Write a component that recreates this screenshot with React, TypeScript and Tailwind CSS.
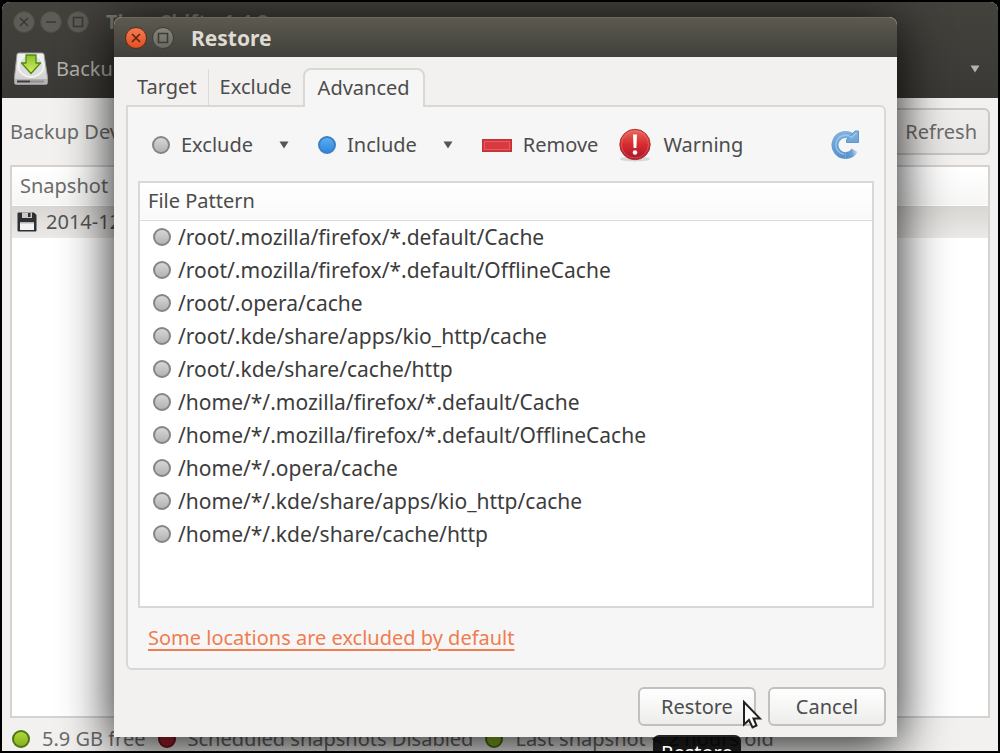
import type { ReactNode } from "react";

const patterns = [
  "/root/.mozilla/firefox/*.default/Cache",
  "/root/.mozilla/firefox/*.default/OfflineCache",
  "/root/.opera/cache",
  "/root/.kde/share/apps/kio_http/cache",
  "/root/.kde/share/cache/http",
  "/home/*/.mozilla/firefox/*.default/Cache",
  "/home/*/.mozilla/firefox/*.default/OfflineCache",
  "/home/*/.opera/cache",
  "/home/*/.kde/share/apps/kio_http/cache",
  "/home/*/.kde/share/cache/http",
];

const dotStyles = {
  gray: "border-[#858585] from-[#dcdcdc] to-[#aeaeae]",
  blue: "border-[#3d7fc4] from-[#5fb2f3] to-[#2a83dd]",
  green: "border-[#4f7512] from-[#b4dc3c] to-[#7fae1c]",
  red: "border-[#7d1420] from-[#cf3a45] to-[#a51c2b]",
};

function Dot({ color }: { color: keyof typeof dotStyles }) {
  return (
    <span
      className={`inline-block size-[18px] shrink-0 rounded-full border-2 bg-linear-to-b bg-origin-border ${dotStyles[color]}`}
    />
  );
}

function Caret({ className }: { className: string }) {
  return (
    <svg viewBox="0 0 10 8" className={`h-[8px] w-[10px] ${className}`} aria-hidden="true">
      <path d="M0.5 0.5h9L5 7.5z" fill="currentColor" />
    </svg>
  );
}

function DriveIcon() {
  return (
    <svg viewBox="0 0 36 34" className="h-[34px] w-[36px]" aria-hidden="true">
      <defs>
        <linearGradient id="driveTop" x1="0" y1="0" x2="0" y2="1">
          <stop offset="0" stopColor="#f4f4f4" />
          <stop offset="1" stopColor="#c9c9c9" />
        </linearGradient>
        <linearGradient id="driveArrow" x1="0" y1="0" x2="0" y2="1">
          <stop offset="0" stopColor="#8cc02a" />
          <stop offset="1" stopColor="#d6f06a" />
        </linearGradient>
      </defs>
      <path d="M4 2.500Q4.300 1 6 1H29Q30.700 1 31 2.500L34.500 25V30.500Q34.500 32.500 32.500 32.500H3.500Q1.500 32.500 1.500 30.500V25Z" fill="url(#driveTop)" stroke="#9a9a9a" />
      <ellipse cx="18" cy="14" rx="12.500" ry="11" fill="#dedede" stroke="#f7f7f7" strokeWidth="1.500" />
      <path d="M2 27H34V30.500Q34 32 32.500 32H3.500Q2 32 2 30.500Z" fill="#b3b3b3" />
      <path d="M4 28.500H17V30.500H4Z" fill="#3b3b3b" />
      <path d="M17 28.500H31V30.500H17Z" fill="#8f8f8f" />
      <path d="M13 3H23V11H27.500L18 21.500L8.500 11H13Z" fill="url(#driveArrow)" stroke="#4f8a0c" strokeWidth="1.300" strokeLinejoin="round" />
    </svg>
  );
}

function FloppyIcon() {
  return (
    <svg viewBox="0 0 20 20" className="size-[20px] shrink-0" aria-hidden="true">
      <path d="M0.500 1.500Q0.500 0.500 1.500 0.500H17L19.500 3V18.500Q19.500 19.500 18.500 19.500H1.500Q0.500 19.500 0.500 18.500Z" fill="#2e3032" />
      <path d="M5 0.500H15V6H5Z" fill="#c9c9c9" />
      <path d="M11 1H13.500V5H11Z" fill="#2e3032" />
      <path d="M3 10H17V18H3Z" fill="#f3f3f3" />
      <path d="M3 10H17V11.500H3Z" fill="#b5b5b5" />
    </svg>
  );
}

function RemoveIcon() {
  return (
    <svg viewBox="0 0 30 13" className="h-[13px] w-[30px]" aria-hidden="true">
      <rect x="0.750" y="0.750" width="28.500" height="11.500" fill="#d93a3f" stroke="#c4323a" strokeWidth="1.500" />
      <rect x="2.500" y="2.500" width="25" height="8" fill="none" stroke="#e25c60" />
    </svg>
  );
}

function WarningIcon() {
  return (
    <svg viewBox="0 0 34 34" className="size-[34px]" aria-hidden="true">
      <defs>
        <linearGradient id="warn" x1="0" y1="0" x2="0" y2="1">
          <stop offset="0" stopColor="#e8695a" />
          <stop offset="0.500" stopColor="#d62b30" />
          <stop offset="1" stopColor="#a8142b" />
        </linearGradient>
      </defs>
      <ellipse cx="17" cy="31" rx="15" ry="2.500" fill="#000" opacity="0.120" />
      <circle cx="17" cy="16.500" r="15.200" fill="url(#warn)" stroke="#b3303a" />
      <circle cx="17" cy="16.500" r="13.500" fill="none" stroke="#f08a80" opacity="0.450" />
      <path d="M15 6.500H19L18.400 20H15.600Z" fill="#fff" />
      <circle cx="17" cy="24.500" r="2.300" fill="#fff" />
    </svg>
  );
}

function ReloadIcon() {
  return (
    <svg viewBox="0 0 30 30" className="size-[30px]" aria-hidden="true">
      <defs>
        <linearGradient id="reload" gradientUnits="userSpaceOnUse" x1="0" y1="0" x2="0" y2="29">
          <stop offset="0" stopColor="#83b3e0" />
          <stop offset="1" stopColor="#5590cb" />
        </linearGradient>
        <linearGradient id="reloadTail" gradientUnits="userSpaceOnUse" x1="14" y1="24" x2="27" y2="20">
          <stop offset="0" stopColor="#5590cb" />
          <stop offset="0.500" stopColor="#6a9fd5" />
          <stop offset="1" stopColor="#8fb8e0" stopOpacity="0.300" />
        </linearGradient>
      </defs>
      <path d="M14.500 25.500A10.500 10.500 0 0 0 23.600 20.200" fill="none" stroke="url(#reloadTail)" strokeWidth="7" />
      <path d="M22 7.600A10.500 10.500 0 1 0 14.600 25.500" fill="none" stroke="url(#reload)" strokeWidth="7" />
      <path d="M27.500 1V12.500H15.500V9.500L24 1Z" fill="url(#reload)" stroke="#5f97d0" strokeLinejoin="round" />
      <path d="M13 24.200A9.500 9.500 0 1 1 20.500 7.500L25.500 3" fill="none" stroke="#a9caeb" strokeWidth="1.400" opacity="0.800" />
    </svg>
  );
}

function WindowButton({ kind, tone, label }: { kind: "close" | "min" | "max"; tone: "dim" | "gray" | "orange"; label: string }) {
  const tones = {
    dim: "border-[#4c4b46] bg-[#5d5c57] text-[#3a3935]",
    gray: "border-[#3c3b36] bg-linear-to-b from-[#86847b] to-[#6a6962] text-[#3d3c38]",
    orange: "border-[#5c2b16] bg-linear-to-b from-[#f47a50] to-[#e14f1f] text-[#5a2211]",
  };
  return (
    <button aria-label={label} className={`flex size-[22px] items-center justify-center rounded-full border ${tones[tone]}`}>
      <svg viewBox="0 0 12 12" className="size-[12px]" fill="none" stroke="currentColor" strokeWidth="1.600" aria-hidden="true">
        {kind === "close" && <path d="M2 2L10 10M10 2L2 10" />}
        {kind === "min" && <path d="M1 6H11" />}
        {kind === "max" && <path d="M1.500 1.500H10.500V10.500H1.500Z" />}
      </svg>
    </button>
  );
}

function ToolButton({ icon, children }: { icon: ReactNode; children: ReactNode }) {
  return (
    <button className="flex items-center gap-[11px] whitespace-nowrap">
      {icon}
      {children}
    </button>
  );
}

function MainWindow() {
  return (
    <div className="flex flex-1 flex-col overflow-hidden rounded-t-lg bg-[#f2f1f0] text-[#6b6b6b]">
      <header className="flex h-[96px] shrink-0 flex-col bg-linear-to-b from-[#43423d] to-[#3a3935] pl-[11px]">
        <div className="flex h-[40px] items-center gap-[5px]">
          <WindowButton kind="close" tone="dim" label="Close main window" />
          <WindowButton kind="min" tone="dim" label="Minimize main window" />
          <WindowButton kind="max" tone="dim" label="Maximize main window" />
          <h1 className="ml-[12px] font-bold text-[#807d75]">Time Shift v1.4.2</h1>
        </div>
        <div className="flex h-[54px] items-center justify-between pr-[18px] text-[#b5b2aa]">
          <button className="flex items-center gap-[7px]">
            <DriveIcon />
            Backup
          </button>
          <button aria-label="More actions">
            <Caret className="text-[#b5b2aa]" />
          </button>
        </div>
      </header>
      <div className="flex flex-1 flex-col px-[8px] pt-[10px]">
        <div className="flex items-center justify-between">
          <span>Backup Device</span>
          <button className="h-[47px] rounded-md border-2 border-[#cbc9c6] bg-linear-to-b from-[#efeeed] to-[#e9e8e6] px-[11px]">
            Refresh
          </button>
        </div>
        <div className="mt-[10px] flex-1 border-2 border-[#d5d2cf] bg-white">
          <table className="w-full border-collapse text-left">
            <thead>
              <tr className="h-[39px] border-b border-[#d6d3d0] bg-linear-to-b from-white to-[#f6f6f5]">
                <th className="px-[8px] font-normal">Snapshot</th>
              </tr>
            </thead>
            <tbody>
              <tr className="h-[32px] bg-linear-to-b from-[#d9d6d3] to-[#ebeae8]">
                <td className="px-[5px] text-[#555]">
                  <span className="flex items-center gap-[9px]">
                    <FloppyIcon />
                    2014-12
                  </span>
                </td>
              </tr>
            </tbody>
          </table>
        </div>
      </div>
      <footer className="flex h-[33px] shrink-0 items-center gap-[12px] overflow-hidden pt-[8px] pl-[10px] leading-[24px] whitespace-nowrap text-[#6b6b6b]">
        <Dot color="green" />
        5.9 GB free
        <Dot color="red" />
        Scheduled snapshots Disabled
        <Dot color="green" />
        Last snapshot &lt; 2 hours old
      </footer>
    </div>
  );
}

const dialogButton =
  "h-[39px] w-[118px] rounded-md border-2 border-[#c2c0bd] bg-linear-to-b from-white to-[#ededec]";

function RestoreDialog() {
  return (
    <div
      role="dialog"
      aria-label="Restore"
      className="absolute top-[17px] right-[103px] bottom-[16px] left-[114px] flex flex-col rounded-t-lg bg-[#f2f1f0] shadow-[0_8px_50px_2px_rgba(0,0,0,0.85)]"
    >
      <div className="flex h-[40px] shrink-0 items-center gap-[5px] rounded-t-lg border-t border-[#6b695e] bg-linear-to-b from-[#5c5a50] to-[#403f3a] pl-[11px]">
        <WindowButton kind="close" tone="orange" label="Close" />
        <WindowButton kind="max" tone="gray" label="Maximize" />
        <h2 className="ml-[12px] text-[21px] font-bold text-[#dfdbd2]">Restore</h2>
      </div>
      <div className="flex flex-1 flex-col pt-[11px] pr-[11px] pb-[11px] pl-[12px]">
        <div role="tablist" className="flex h-[37px] items-end">
          <button role="tab" aria-selected="false" className="h-[36px] border-r border-[#dcdad8] px-[11px]">
            Target
          </button>
          <button role="tab" aria-selected="false" className="h-[36px] px-[11px]">
            Exclude
          </button>
          <button
            role="tab"
            aria-selected="true"
            className="z-10 -mb-[2px] h-[39px] rounded-t-lg border-2 border-b-0 border-[#dad8d5] bg-[#f6f6f6] px-[13px] pb-[2px]"
          >
            Advanced
          </button>
        </div>
        <div role="tabpanel" className="flex flex-1 flex-col rounded-md rounded-tl-none border-2 border-[#dad8d5] bg-[#f6f6f6] px-[10px]">
          <div className="flex h-[74px] items-center pt-[2px] pr-[13px] pl-[14px]">
            <ToolButton icon={<Dot color="gray" />}>Exclude</ToolButton>
            <button aria-label="Exclude options" className="ml-[26px]">
              <Caret className="text-[#555]" />
            </button>
            <div className="ml-[29px]">
              <ToolButton icon={<Dot color="blue" />}>Include</ToolButton>
            </div>
            <button aria-label="Include options" className="ml-[26px]">
              <Caret className="text-[#555]" />
            </button>
            <div className="ml-[29px]">
              <ToolButton icon={<RemoveIcon />}>Remove</ToolButton>
            </div>
            <div className="ml-[20px]">
              <ToolButton icon={<WarningIcon />}>Warning</ToolButton>
            </div>
            <button aria-label="Reload list" className="ml-auto">
              <ReloadIcon />
            </button>
          </div>
          <div className="flex-1 border-2 border-[#dad8d5] bg-white">
            <table className="w-full border-collapse text-left">
              <thead>
                <tr className="h-[37px] border-b border-[#dcdbd9] bg-linear-to-b from-white to-[#f9f9f9]">
                  <th className="px-[8px] font-normal">File Pattern</th>
                </tr>
              </thead>
              <tbody>
                {patterns.map((pattern) => (
                  <tr key={pattern} className="h-[33px]">
                    <td className="px-[13px] py-0 text-[21px] leading-[32px] text-[#3c3c3c]">
                      <span className="flex items-center gap-[7px]">
                        <Dot color="gray" />
                        {pattern}
                      </span>
                    </td>
                  </tr>
                ))}
              </tbody>
            </table>
          </div>
          <div className="flex h-[60px] items-center px-[10px]">
            <a href="#defaults" className="text-[#f07c4f] underline decoration-2 underline-offset-4">
              Some locations are excluded by default
            </a>
          </div>
        </div>
        <div className="mt-[17px] flex justify-end gap-[12px]">
          <button className={dialogButton}>Restore</button>
          <button className={dialogButton}>Cancel</button>
        </div>
      </div>
    </div>
  );
}

export default function App() {
  return (
    <div className="relative flex h-screen min-h-[753px] flex-col overflow-hidden border-2 border-black bg-black font-['Noto_Sans',sans-serif] text-[20px] leading-[28px] text-[#4c4c4c]">
      <MainWindow />
      <div className="pointer-events-none absolute -inset-[2px] *:pointer-events-auto">
        <RestoreDialog />
        <div role="tooltip" className="absolute bottom-[-14px] left-[653px] rounded-md bg-black/85 px-[8px] pt-[4px] text-white">
          Restore
        </div>
        <svg viewBox="0 0 20 30" className="absolute bottom-[23px] left-[742px] h-[30px] w-[20px]" aria-hidden="true">
          <path d="M2 2V24.500L7 20L10.500 27.500L14.500 25.500L11.500 18.500H18Z" fill="#fff" stroke="#222" strokeWidth="2" />
        </svg>
      </div>
    </div>
  );
}
